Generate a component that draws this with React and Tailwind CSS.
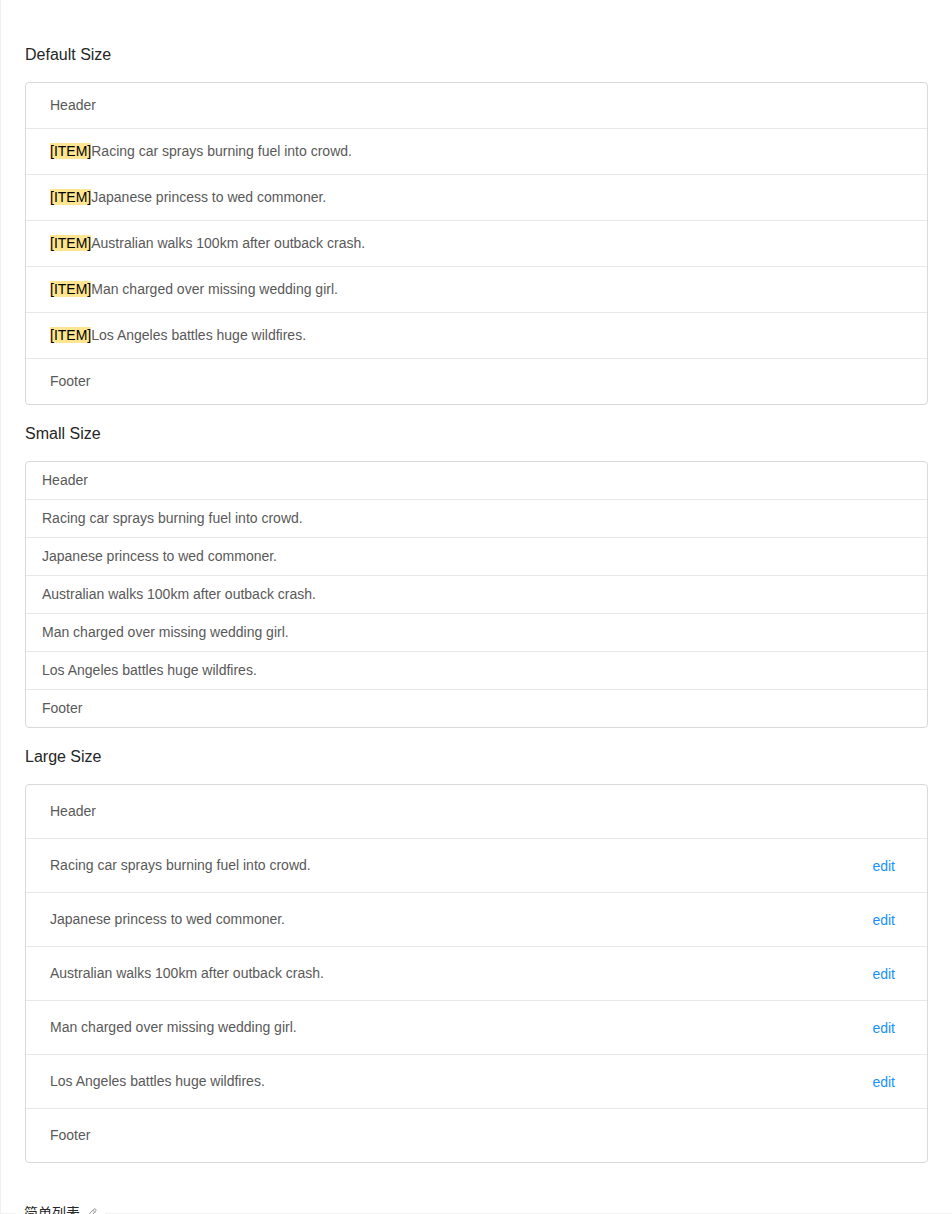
import React from 'react';
import { Pencil } from 'lucide-react';

const data = [
  'Racing car sprays burning fuel into crowd.',
  'Japanese princess to wed commoner.',
  'Australian walks 100km after outback crash.',
  'Man charged over missing wedding girl.',
  'Los Angeles battles huge wildfires.',
];

const sizes = {
  default: 'px-6 py-3',
  small: 'px-4 py-2',
  large: 'px-6 py-4',
};

const List = ({ size, renderItem }) => {
  const pad = sizes[size];
  return (
    <div className="border border-[#d9d9d9] rounded-[4px] text-sm leading-[21px] text-[#595959]">
      <div className={`${pad} border-b border-[#e8e8e8]`}>Header</div>
      {data.map((item) => (
        <div key={item} className={`${pad} border-b border-[#e8e8e8] flex items-center justify-between`}>
          {renderItem(item)}
        </div>
      ))}
      <div className={pad}>Footer</div>
    </div>
  );
};

// 1px extra on top so the text sits where the reference has it
const Title = ({ children }) => (
  <h3 className="mt-4 mb-[15px] pt-px text-base leading-6 text-[#262626]">{children}</h3>
);

export default function App() {
  return (
    <div
      className="bg-white"
      style={{ fontFamily: '"Liberation Sans", Arial, "Noto Sans CJK SC", sans-serif' }}
    >
      <div className="relative border-l border-b border-[#f0f0f0] px-6 pt-[26px] pb-[50px]">
        <Title>Default Size</Title>
        <List
          size="default"
          renderItem={(item) => (
            <span>
              <mark className="bg-[#ffe58f] text-black p-0">[ITEM]</mark>
              {item}
            </span>
          )}
        />
        <Title>Small Size</Title>
        <List size="small" renderItem={(item) => <span>{item}</span>} />
        <Title>Large Size</Title>
        <List
          size="large"
          renderItem={(item) => (
            <>
              <span>{item}</span>
              <a href="#" className="px-2 translate-y-px text-[#1890ff]">edit</a>
            </>
          )}
        />
        <div className="absolute left-[15px] top-[calc(100%-12px)] bg-white px-2 py-px flex items-center gap-1.5 text-sm leading-[22px] text-[#262626]">
          <span>简单列表</span>
          <Pencil size={11} className="text-[#8c8c8c]" />
        </div>
      </div>
    </div>
  );
}
